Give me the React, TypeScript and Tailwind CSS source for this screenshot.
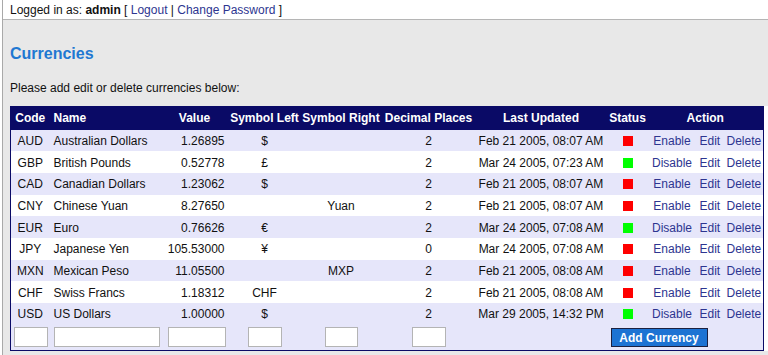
import React from "react";

type Currency = {
  code: string;
  name: string;
  value: string;
  left: string;
  right: string;
  places: string;
  updated: string;
  on: boolean;
};

const currencies: Currency[] = [
  { code: "AUD", name: "Australian Dollars", value: "1.26895", left: "$", right: "", places: "2", updated: "Feb 21 2005, 08:07 AM", on: false },
  { code: "GBP", name: "British Pounds", value: "0.52778", left: "£", right: "", places: "2", updated: "Mar 24 2005, 07:23 AM", on: true },
  { code: "CAD", name: "Canadian Dollars", value: "1.23062", left: "$", right: "", places: "2", updated: "Feb 21 2005, 08:07 AM", on: false },
  { code: "CNY", name: "Chinese Yuan", value: "8.27650", left: "", right: "Yuan", places: "2", updated: "Feb 21 2005, 08:07 AM", on: false },
  { code: "EUR", name: "Euro", value: "0.76626", left: "€", right: "", places: "2", updated: "Mar 24 2005, 07:08 AM", on: true },
  { code: "JPY", name: "Japanese Yen", value: "105.53000", left: "¥", right: "", places: "0", updated: "Mar 24 2005, 07:08 AM", on: false },
  { code: "MXN", name: "Mexican Peso", value: "11.05500", left: "", right: "MXP", places: "2", updated: "Feb 21 2005, 08:08 AM", on: false },
  { code: "CHF", name: "Swiss Francs", value: "1.18312", left: "CHF", right: "", places: "2", updated: "Feb 21 2005, 08:08 AM", on: false },
  { code: "USD", name: "US Dollars", value: "1.00000", left: "$", right: "", places: "2", updated: "Mar 29 2005, 14:32 PM", on: true },
];

const link = "text-[#2d3590] cursor-pointer";
const input = "block h-[20px] border border-[#b4b4b4] bg-white";

export default function App() {
  return (
    <div className="h-[355px] w-[768px] overflow-hidden bg-white font-['Liberation_Sans',Arial,sans-serif] text-[12px] text-[#111]">
      <div className="ml-[2px] flex h-full flex-col border-l border-[#a9a9a9]">
        {/* top bar */}
        <div className="flex h-[20px] items-center border-b border-[#b5b5b5] pl-[7px]">
          <span>
            Logged in as: <b>admin</b> [ <span className={link}>Logout</span> |{" "}
            <span className={link}>Change Password</span> ]
          </span>
        </div>

        <div className="flex-1 bg-[#e8e8e8] pl-[7px]">
          <h1 className="mt-[24px] text-[16px] leading-[20px] font-bold text-[#1f78d2]">Currencies</h1>
          <p className="mt-[17px] leading-[14px]">Please add edit or delete currencies below:</p>

          <div className="mt-[11px] flex">
            <table className="w-[755px] table-fixed border-collapse border border-[#0a0a66]">
              <colgroup>
                <col className="w-[39px]" />
                <col className="w-[110px]" />
                <col className="w-[70px]" />
                <col className="w-[70px]" />
                <col className="w-[83px]" />
                <col className="w-[92px]" />
                <col className="w-[133px]" />
                <col className="w-[40px]" />
                <col className="w-[49px]" />
                <col className="w-[26px]" />
                <col className="w-[41px]" />
              </colgroup>
              <thead>
                <tr className="h-[23px] bg-[#0a0a66] font-bold text-white">
                  <th className="text-center">Code</th>
                  <th className="pl-[4px] text-left">Name</th>
                  <th className="text-center">Value</th>
                  <th className="text-center whitespace-nowrap">Symbol Left</th>
                  <th className="text-center whitespace-nowrap">Symbol Right</th>
                  <th className="text-center whitespace-nowrap">Decimal Places</th>
                  <th className="text-center">Last Updated</th>
                  <th className="text-center">Status</th>
                  <th colSpan={3} className="text-center">Action</th>
                </tr>
              </thead>
              <tbody>
                {currencies.map((c, i) => (
                  <tr key={c.code} className={`h-[21.7px] pt-px ${i % 2 === 0 ? "bg-[#e6e6fa]" : "bg-white"}`}>
                    <td className="pt-px text-center">{c.code}</td>
                    <td className="pt-px pl-[4px] whitespace-nowrap">{c.name}</td>
                    <td className="pt-px pr-[5px] text-right">{c.value}</td>
                    <td className="pt-px text-center">{c.left}</td>
                    <td className="pt-px text-center">{c.right}</td>
                    <td className="pt-px text-center">{c.places}</td>
                    <td className="pt-px text-center whitespace-nowrap">{c.updated}</td>
                    <td className="pt-px">
                      <div className={`mx-auto h-[10px] w-[10px] ${c.on ? "bg-[#00ff00]" : "bg-[#ff0000]"}`} />
                    </td>
                    <td className="pt-px text-center">
                      <span className={link}>{c.on ? "Disable" : "Enable"}</span>
                    </td>
                    <td className="pt-px pl-[3px]">
                      <span className={link}>Edit</span>
                    </td>
                    <td className="pt-px pl-[4px]">
                      <span className={link}>Delete</span>
                    </td>
                  </tr>
                ))}
                <tr className="h-[26px] bg-[#e6e6fa]">
                  <td>
                    <input className={`${input} ml-[3px] w-[34px]`} />
                  </td>
                  <td>
                    <input className={`${input} ml-[4px] w-[106px]`} />
                  </td>
                  <td>
                    <input className={`${input} ml-[8px] w-[58px]`} />
                  </td>
                  <td>
                    <input className={`${input} ml-[18px] w-[34px]`} />
                  </td>
                  <td>
                    <input className={`${input} ml-[25px] w-[33px]`} />
                  </td>
                  <td>
                    <input className={`${input} ml-[29px] w-[34px]`} />
                  </td>
                  <td />
                  <td colSpan={3}>
                    <button className="ml-[3px] h-[19px] w-[97px] border border-[#1c2040] bg-[#1d73d3] text-[12px] font-bold text-white">
                      Add Currency
                    </button>
                  </td>
                  <td />
                </tr>
              </tbody>
            </table>
            <div className="w-[4px] bg-white" />
          </div>
        </div>
      </div>
    </div>
  );
}
